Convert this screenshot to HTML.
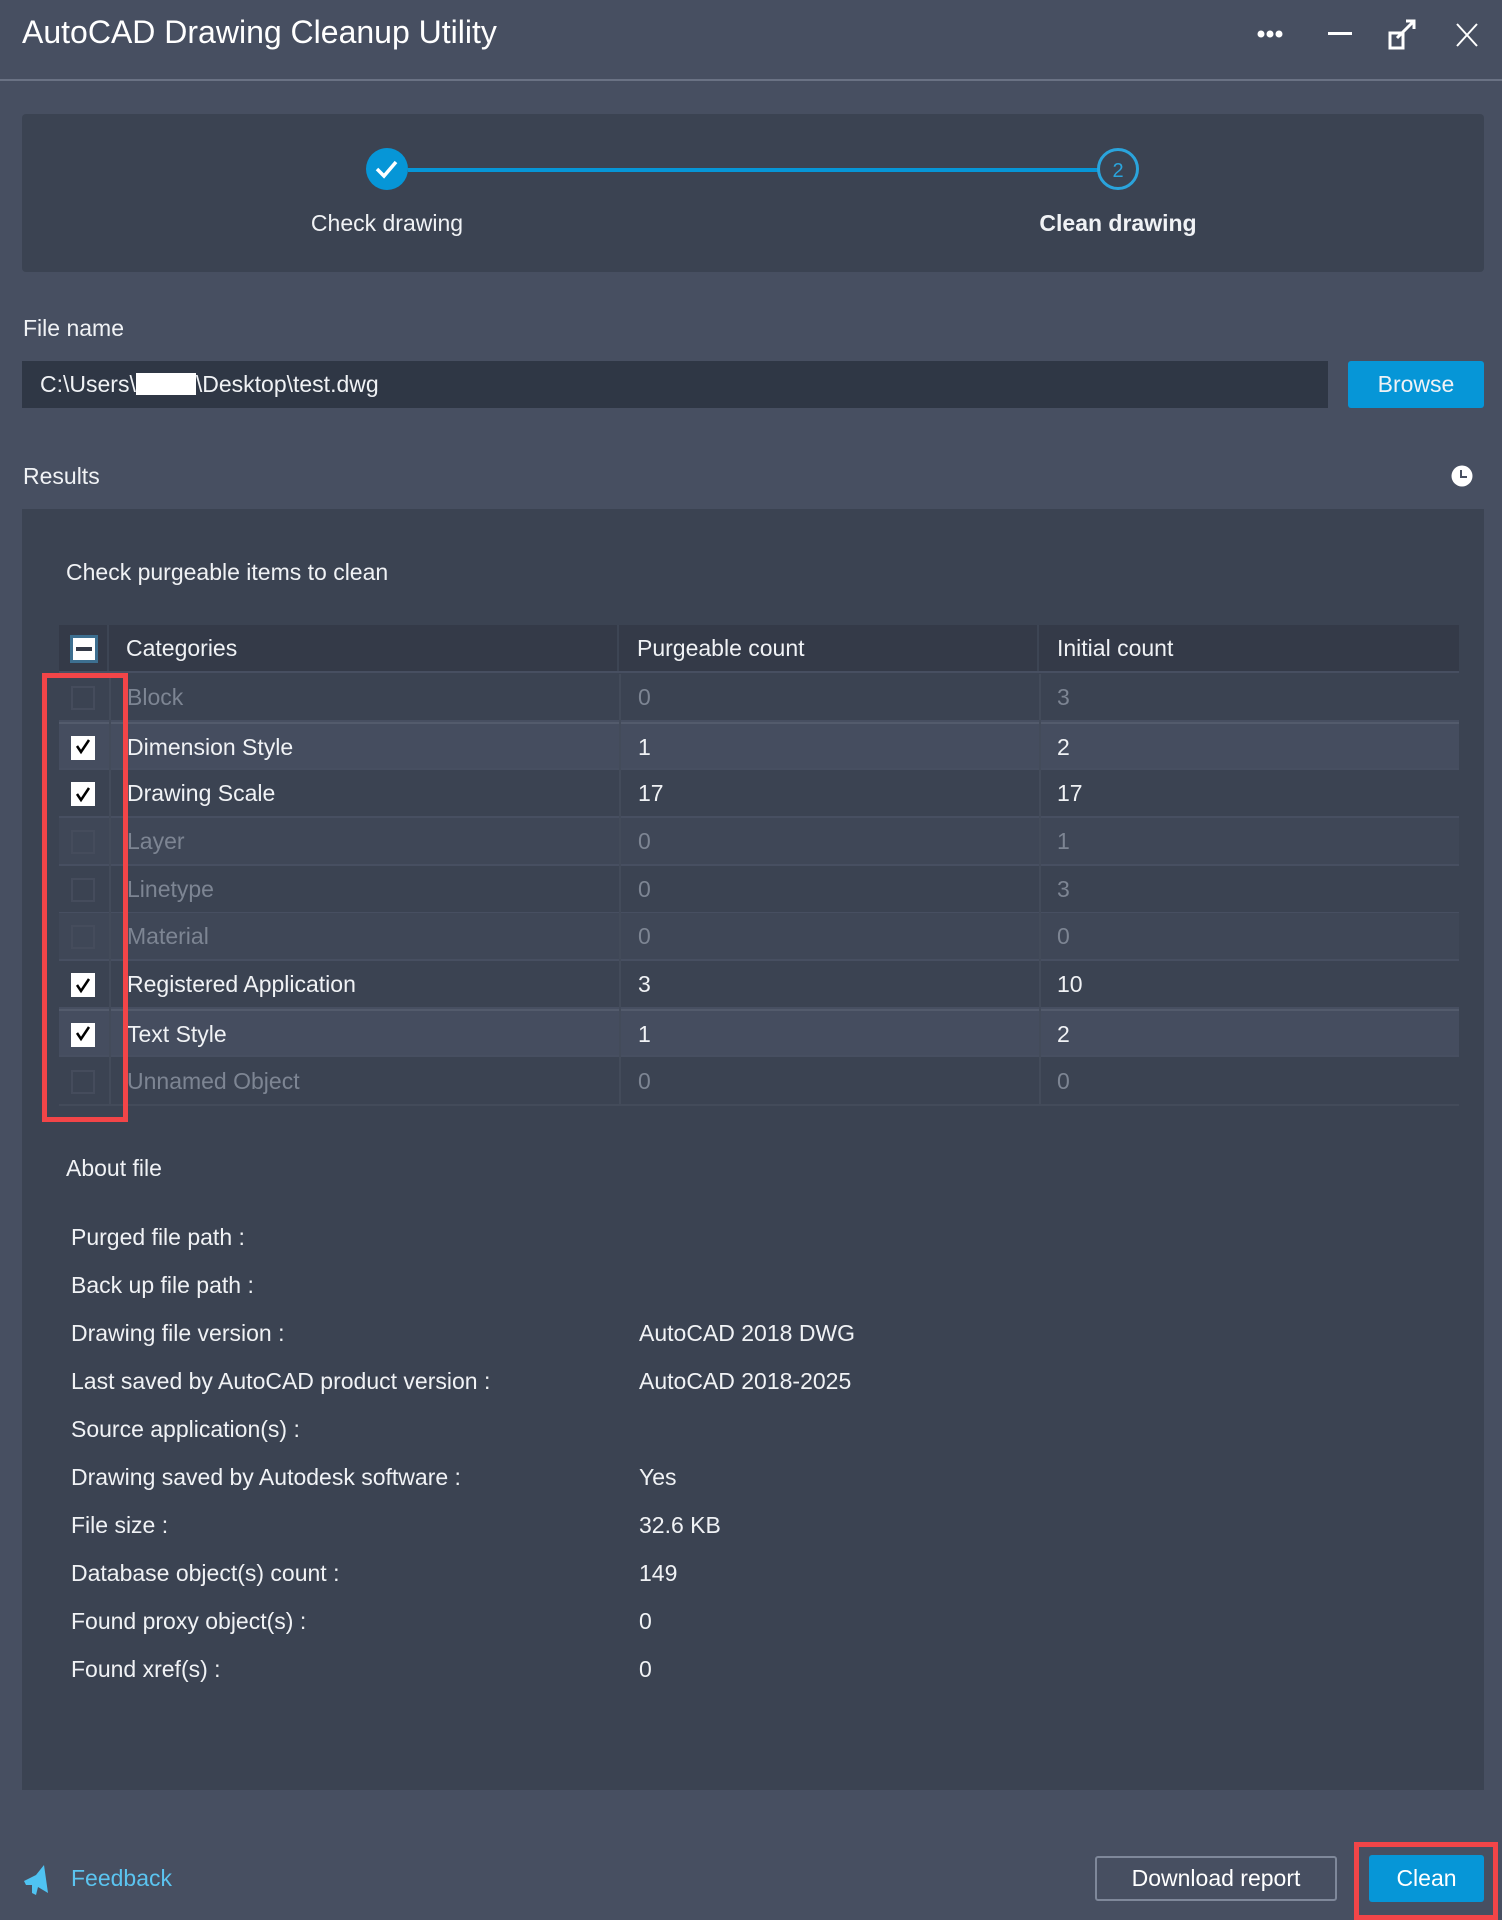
<!DOCTYPE html>
<html><head><meta charset="utf-8"><style>
*{margin:0;padding:0;box-sizing:border-box}
body{width:1502px;height:1920px;background:#474f61;font-family:"Liberation Sans",sans-serif;color:#f0f2f5;position:relative;overflow:hidden;font-size:23px}
.a{position:absolute}
.t{white-space:nowrap;line-height:1}
.row{position:absolute;left:59px;width:1400px;height:48px;border-bottom:2px solid #474f61}
.row div{position:absolute;top:0;height:46px;line-height:46px;white-space:nowrap}
.cb{position:absolute;left:12px;top:12px;width:24px;height:24px;border:2px solid #454c5c}
.ck{background:#fff;border:none}
.dim{color:#7d8593}
</style></head><body>
<div class="a t" style="left:22px;top:16px;font-size:32px;color:#fff">AutoCAD Drawing Cleanup Utility</div>
<svg class="a" style="left:1255px;top:18px" width="230" height="34" viewBox="0 0 230 34">
<circle cx="6" cy="16" r="3.5" fill="#fff"/><circle cx="15" cy="16" r="3.5" fill="#fff"/><circle cx="24" cy="16" r="3.5" fill="#fff"/>
<rect x="73" y="14" width="24" height="3" fill="#fff"/>
<rect x="135" y="15" width="13" height="15" fill="none" stroke="#fff" stroke-width="3"/>
<path d="M142 20 L158 4 M151 3 H159 V11" stroke="#fff" stroke-width="3" fill="none"/>
<path d="M202 6 L222 28 M222 6 L202 28" stroke="#fff" stroke-width="2"/>
</svg>
<div class="a" style="left:0;top:79px;width:1502px;height:2px;background:#6a7284"></div>

<div class="a" style="left:22px;top:114px;width:1462px;height:158px;background:#3b4352;border-radius:4px"></div>
<div class="a" style="left:408px;top:168px;width:690px;height:4px;background:#0696d7"></div>
<svg class="a" style="left:365px;top:147px" width="44" height="44"><circle cx="22" cy="22" r="21" fill="#0696d7"/><path d="M12 22 L19 29 L31 15" stroke="#fff" stroke-width="3.5" fill="none"/></svg>
<svg class="a" style="left:1096px;top:147px" width="44" height="44"><circle cx="22" cy="22" r="19.5" fill="none" stroke="#2aa4dc" stroke-width="3"/><text x="22" y="30" font-size="20" fill="#2aa4dc" text-anchor="middle" font-family="Liberation Sans">2</text></svg>
<div class="a t" style="left:387px;top:212px;transform:translateX(-50%)">Check drawing</div>
<div class="a t" style="left:1118px;top:212px;transform:translateX(-50%);font-weight:bold">Clean drawing</div>

<div class="a t" style="left:23px;top:317px">File name</div>
<div class="a" style="left:22px;top:361px;width:1306px;height:47px;background:#2f3745"></div>
<div class="a t" style="left:40px;top:373px">C:\Users\<span style="display:inline-block;width:60px;height:22px;background:#fff;vertical-align:-3px"></span>\Desktop\test.dwg</div>
<div class="a" style="left:1348px;top:361px;width:136px;height:47px;background:#0696d7;border-radius:3px;text-align:center;line-height:47px">Browse</div>

<div class="a t" style="left:23px;top:465px">Results</div>
<svg class="a" style="left:1451px;top:465px" width="22" height="22"><circle cx="11" cy="11" r="10.5" fill="#fff"/><path d="M10 5 V12 H16" stroke="#474f61" stroke-width="2" fill="none"/></svg>

<div class="a" style="left:22px;top:509px;width:1462px;height:1281px;background:#3b4352"></div>
<div class="a t" style="left:66px;top:561px">Check purgeable items to clean</div>

<div class="row" style="top:625px;background:#343a48">
<div style="left:0;width:50px;border-right:2px solid #3d4554"></div>
<span class="cb" style="top:10px;left:11px;width:28px;height:28px;border:3px solid #3d6f90;background:#fff"></span><span class="a" style="left:17px;top:22px;width:16px;height:4px;background:#343a48"></span>
<div style="left:50px;padding-left:17px;width:510px;border-right:2px solid #3d4554">Categories</div>
<div style="left:560px;padding-left:18px;width:420px;border-right:2px solid #3d4554">Purgeable count</div>
<div style="left:980px;padding-left:18px">Initial count</div>
</div>

<div class="row" style="top:674px;background:#3b4352"><span class="cb"></span><div class="dim" style="left:68px">Block</div><div class="dim" style="left:579px">0</div><div class="dim" style="left:998px">3</div></div>
<div class="row" style="top:722px;background:#454d5f;border-top:2px solid #535b6c"><span class="cb ck"></span><div style="left:68px">Dimension Style</div><div style="left:579px">1</div><div style="left:998px">2</div></div>
<div class="row" style="top:770px;background:#3b4352"><span class="cb ck"></span><div style="left:68px">Drawing Scale</div><div style="left:579px">17</div><div style="left:998px">17</div></div>
<div class="row" style="top:818px;background:#3f4757"><span class="cb"></span><div class="dim" style="left:68px">Layer</div><div class="dim" style="left:579px">0</div><div class="dim" style="left:998px">1</div></div>
<div class="row" style="top:866px;background:#3b4352"><span class="cb"></span><div class="dim" style="left:68px">Linetype</div><div class="dim" style="left:579px">0</div><div class="dim" style="left:998px">3</div></div>
<div class="row" style="top:913px;background:#3f4757"><span class="cb"></span><div class="dim" style="left:68px">Material</div><div class="dim" style="left:579px">0</div><div class="dim" style="left:998px">0</div></div>
<div class="row" style="top:961px;background:#3b4352"><span class="cb ck"></span><div style="left:68px">Registered Application</div><div style="left:579px">3</div><div style="left:998px">10</div></div>
<div class="row" style="top:1009px;background:#454d5f;border-top:2px solid #535b6c"><span class="cb ck"></span><div style="left:68px">Text Style</div><div style="left:579px">1</div><div style="left:998px">2</div></div>
<div class="row" style="top:1058px;background:#3b4352;border-bottom:2px solid #434b5a"><span class="cb"></span><div class="dim" style="left:68px">Unnamed Object</div><div class="dim" style="left:579px">0</div><div class="dim" style="left:998px">0</div></div>
<div class="a" style="left:109px;top:674px;width:2px;height:432px;background:#434b5a"></div>
<div class="a" style="left:619px;top:674px;width:2px;height:432px;background:#434b5a"></div>
<div class="a" style="left:1039px;top:674px;width:2px;height:432px;background:#434b5a"></div>
<svg class="a" style="left:71px;top:722px" width="24" height="340">
<path d="M6 12 L10 18 L18 6" stroke="#000" stroke-width="2.5" fill="none" transform="translate(0,12)"/>
<path d="M6 12 L10 18 L18 6" stroke="#000" stroke-width="2.5" fill="none" transform="translate(0,60)"/>
<path d="M6 12 L10 18 L18 6" stroke="#000" stroke-width="2.5" fill="none" transform="translate(0,251)"/>
<path d="M6 12 L10 18 L18 6" stroke="#000" stroke-width="2.5" fill="none" transform="translate(0,299)"/>
</svg>
<div class="a" style="left:42px;top:673px;width:86px;height:449px;border:5px solid #f24548"></div>

<div class="a t" style="left:66px;top:1157px">About file</div>
<div class="a" style="left:71px;top:1213px;line-height:48px;white-space:nowrap">Purged file path :<br>Back up file path :<br>Drawing file version :<br>Last saved by AutoCAD product version :<br>Source application(s) :<br>Drawing saved by Autodesk software :<br>File size :<br>Database object(s) count :<br>Found proxy object(s) :<br>Found xref(s) :</div>
<div class="a" style="left:639px;top:1213px;line-height:48px;white-space:nowrap"><br><br>AutoCAD 2018 DWG<br>AutoCAD 2018-2025<br><br>Yes<br>32.6 KB<br>149<br>0<br>0</div>

<svg class="a" style="left:22px;top:1863px" width="34" height="34"><path d="M2 18 L14 12 L22 2 L26 30 L16 24 L14 32 L10 30 L10 22 L4 22 Z" fill="#4fc3f2"/></svg>
<div class="a t" style="left:71px;top:1867px;color:#5bc4f0">Feedback</div>
<div class="a" style="left:1095px;top:1856px;width:242px;height:45px;border:2px solid #7f889a;border-radius:3px;text-align:center;line-height:41px;color:#fff">Download report</div>
<div class="a" style="left:1369px;top:1855px;width:115px;height:47px;background:#0696d7;border-radius:3px;text-align:center;line-height:47px;color:#fff">Clean</div>
<div class="a" style="left:1354px;top:1842px;width:144px;height:78px;border:5px solid #f24548"></div>
</body></html>
